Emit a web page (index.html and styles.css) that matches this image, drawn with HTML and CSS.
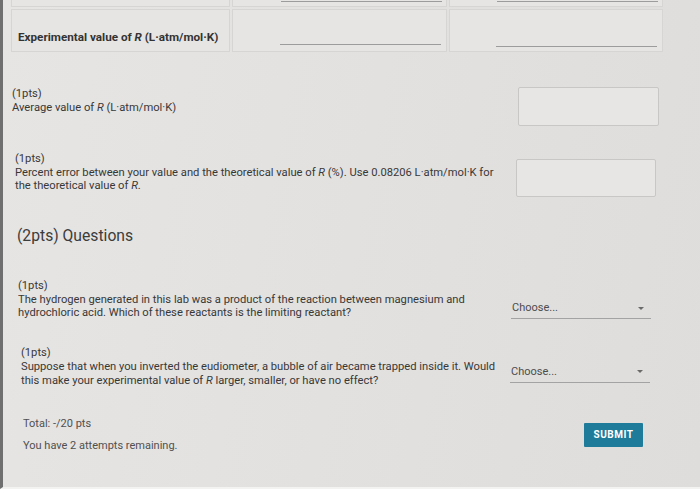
FILE: index.html
```html
<!DOCTYPE html>
<html lang="en">
<head>
    <meta charset="UTF-8">
    <meta name="viewport" content="width=device-width, initial-scale=1.0">
    <title>Quiz - Gas Constant Lab</title>
    <link rel="stylesheet" href="styles.css">
</head>
<body>
    <div class="page">
        <div class="answers">
            <div class="cell cut"></div>
            <div class="cell cut"><span class="blank"></span></div>
            <div class="cell cut"><span class="blank"></span></div>
            <div class="cell label">Experimental value of&nbsp;<i>R</i>&nbsp;(L·atm/mol·K)</div>
            <div class="cell"><span class="blank"></span></div>
            <div class="cell"><span class="blank low"></span></div>
        </div>

        <div class="row q1">
            <div class="question">
                <p class="pts">(1pts)</p>
                <p class="prompt">Average value of <i>R</i> (L·atm/mol·K)</p>
            </div>
            <div class="box"></div>
        </div>

        <div class="row q2">
            <div class="question wide">
                <p class="pts">(1pts)</p>
                <p class="prompt">Percent error between your value and the theoretical value of <i>R</i> (%). Use 0.08206 L·atm/mol·K for<br>the theoretical value of <i>R</i>.</p>
            </div>
            <div class="box"></div>
        </div>

        <h2 class="heading">(2pts) Questions</h2>

        <div class="row pick q3">
            <div class="question">
                <p class="pts">(1pts)</p>
                <p class="prompt">The hydrogen generated in this lab was a product of the reaction between magnesium and hydrochloric acid. Which of these reactants is the limiting reactant?</p>
            </div>
            <div class="select"><span>Choose...</span><span class="arrow"></span></div>
        </div>

        <div class="row pick q4">
            <div class="question">
                <p class="pts">(1pts)</p>
                <p class="prompt">Suppose that when you inverted the eudiometer, a bubble of air became trapped inside it. Would<br>this make your experimental value of <i>R</i> larger, smaller, or have no effect?</p>
            </div>
            <div class="select"><span>Choose...</span><span class="arrow"></span></div>
        </div>

        <div class="row footer">
            <div>
                <p class="total">Total: -/20 pts</p>
                <p class="attempts">You have 2 attempts remaining.</p>
            </div>
            <button class="submit">SUBMIT</button>
        </div>
    </div>
</body>
</html>
```

FILE: styles.css
```css
body {
    margin: 0;
    font-family: Roboto, "Liberation Sans", sans-serif;
    color: #383838;
    background: linear-gradient(100deg, #e6e5e3, #dedddb);
}
p {
    margin: 0;
}
.page {
    min-height: 489px;
    box-sizing: border-box;
    border-left: 3px solid #6f6f6f;
    border-bottom: 2px solid #f3f3f1;
    overflow: hidden;
}
.answers {
    display: grid;
    grid-template-columns: 219px 215px 214px;
    grid-template-rows: 7px 43px;
    gap: 2px;
    margin-left: 8px;
}
.cell {
    display: flex;
    justify-content: flex-end;
    align-items: flex-end;
    padding: 0 5px 6px;
    background-color: #e6e5e3;
    border: 1px solid #d6d5d3;
}
.cell.cut {
    align-items: flex-start;
    padding: 1px 4px 0;
    border-top: none;
}
.cell.label {
    justify-content: flex-start;
    padding: 0 0 7px 6px;
    font-size: 11.7px;
    font-weight: 700;
    color: #333;
    white-space: nowrap;
}
.blank {
    width: 161px;
    border-bottom: 1px solid #9c9c9c;
}
.blank.low {
    margin-bottom: -2px;
}
.row {
    display: flex;
    justify-content: space-between;
    align-items: center;
}
.question {
    width: 480px;
    font-size: 11.2px;
}
.question.wide {
    width: 490px;
}
.pts {
    line-height: 15px;
}
.prompt {
    line-height: 13.2px;
}
.box {
    width: 141px;
    height: 39px;
    box-sizing: border-box;
    margin-top: 13px;
    background-color: #e7e6e4;
    border: 1px solid #c8c7c5;
    border-radius: 2px;
}
.q1 {
    margin-top: 22px;
    padding: 0 41px 0 9px;
}
.q2 {
    margin-top: 20px;
    padding: 0 44px 0 12px;
}
.q2 .box {
    width: 140px;
    height: 38px;
}
.heading {
    margin: 29px 0 0 14px;
    font-size: 15.7px;
    line-height: 20px;
    font-weight: 400;
    color: #3c3c3c;
}
.pick {
    align-items: flex-end;
}
.q3 {
    margin-top: 32px;
    padding: 0 49px 0 15px;
}
.q4 {
    margin-top: 26px;
    padding: 0 50px 0 18px;
}
.q4 .select {
    margin-bottom: 4px;
}
.select {
    width: 140px;
    box-sizing: border-box;
    display: flex;
    justify-content: space-between;
    align-items: center;
    padding: 0 7px 3px 1px;
    font-size: 11px;
    line-height: 14px;
    color: #4d4d4d;
    border-bottom: 1px solid #a3a3a3;
}
.arrow {
    width: 0;
    height: 0;
    border-left: 3px solid transparent;
    border-right: 3px solid transparent;
    border-top: 3px solid #6a6a6a;
}
.footer {
    margin-top: 30px;
    padding: 0 57px 0 20px;
    font-size: 11px;
    color: #505050;
}
.total,
.attempts {
    line-height: 14px;
}
.attempts {
    margin-top: 8px;
}
.submit {
    width: 59px;
    height: 24px;
    border: none;
    border-radius: 1px;
    background-color: #1f7b9a;
    color: #fff;
    font-family: Roboto, "Liberation Sans", sans-serif;
    font-size: 10px;
    font-weight: 700;
    letter-spacing: 0.5px;
}
```
